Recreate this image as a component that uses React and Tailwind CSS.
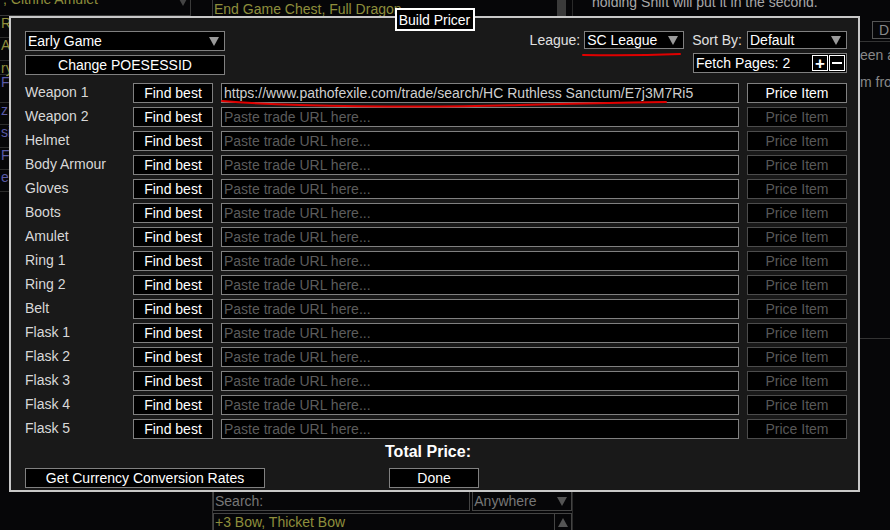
import React from "react";

const slots = [
  "Weapon 1",
  "Weapon 2",
  "Helmet",
  "Body Armour",
  "Gloves",
  "Boots",
  "Amulet",
  "Ring 1",
  "Ring 2",
  "Belt",
  "Flask 1",
  "Flask 2",
  "Flask 3",
  "Flask 4",
  "Flask 5",
];

// fragments of the item list peeking out from behind the dialog
const leftItems = [
  ["Ri", "h-[22px] text-[#8e8e3c]"],
  ["Am", "h-[23px] text-[#8e8e3c]"],
  ["ry", "h-[14px] text-[#8e8e3c]"],
  ["Fe", "h-[28px] text-[#5a5aa6]"],
  ["z F", "h-[22px] text-[#5a5aa6]"],
  ["sil", "h-[23px] text-[#5a5aa6]"],
  ["Fla", "h-[22px] text-[#5a5aa6]"],
  ["e", "h-[22px] text-[#5a5aa6]"],
];

function Arrow({ up, className = "" }) {
  return (
    <svg width="10" height="9" viewBox="0 0 10 9" className={className}>
      {up ? (
        <polygon points="0,9 10,9 5,0" fill="currentColor" />
      ) : (
        <polygon points="0,0 10,0 5,9" fill="currentColor" />
      )}
    </svg>
  );
}

function Dropdown({ value, className = "" }) {
  return (
    <div
      className={`flex items-center justify-between border border-[#808080] bg-black pl-[2px] pr-[5px] text-white ${className}`}
    >
      <span className="leading-none">{value}</span>
      <Arrow className="text-[#9a9a9a]" />
    </div>
  );
}

function Btn({ children, className = "", disabled }) {
  return (
    <div
      className={`flex items-center justify-center bg-black leading-none ${
        disabled
          ? "border border-[#4c4c4c] text-[#585858]"
          : "border border-[#808080] text-white"
      } ${className}`}
    >
      {children}
    </div>
  );
}

function Background() {
  return (
    <div className="flex h-full w-full">
      {/* item list on the left */}
      <div className="flex w-[191px] shrink-0 flex-col">
        <div className="flex h-[16px] items-start justify-between border-b border-r border-[#3a3a3a] pl-[3px] pr-[2px]">
          <span className="-mt-[8px] leading-none text-[#8e8e3c]">, Citrine Amulet</span>
          <Arrow className="-mt-[3px] text-[#444]" />
        </div>
        {leftItems.map(([t, c], i) => (
          <div key={i} className={`border-b border-[#2c2c2c] pl-[1px] leading-none ${c}`}>
            {t}
          </div>
        ))}
      </div>

      <div className="w-[21px] shrink-0" />

      {/* middle column */}
      <div className="flex w-[360px] shrink-0 flex-col border-l border-[#3a3a3a]">
        <div className="flex h-[16px] justify-between">
          <span className="pl-[1px] pt-[2px] leading-none text-[#8e8e3c]">End Game Chest, Full Dragon</span>
          <div className="mr-[6px] h-full w-[9px] bg-[#3a3a3a]" />
        </div>
        <div className="flex-1" />
        <div className="flex h-[20px] gap-[2px]">
          <div className="w-[258px] border border-[#444] pl-[1px] leading-[18px] text-[#777]">
            Search:
          </div>
          <div className="flex w-[100px] items-center justify-between border border-[#444] pl-[1px] pr-[4px] text-[#777]">
            <span className="leading-none">Anywhere</span>
            <Arrow className="text-[#555]" />
          </div>
        </div>
        <div className="mt-[2px] flex h-[17px] justify-between border border-b-0 border-[#444]">
          <span className="pl-[1px] pt-[1px] leading-none text-[#8e8e3c]">+3 Bow, Thicket Bow</span>
          <div className="flex w-[17px] items-center justify-center border-l border-[#444]">
            <Arrow up className="text-[#555]" />
          </div>
        </div>
      </div>

      {/* right column */}
      <div className="flex min-w-0 flex-1 flex-col overflow-hidden border-l border-[#2a2a2a]">
        <div className="-mt-[5px] h-[14px] whitespace-nowrap pl-[19px] leading-none text-[#a8a8a8]">
          holding Shift will put it in the second.
        </div>
        <div className="mt-[12px] flex h-[18px] pl-[299px]">
          <div className="w-[30px] shrink-0 border border-[#555] pl-[6px] leading-[16px] text-[#888]">D</div>
        </div>
        <div className="mt-[2px] border-b border-[#333]" />
        <div className="mt-[6px] whitespace-nowrap pl-[287px] leading-none text-[#888]">een all</div>
        <div className="mt-[13px] whitespace-nowrap pl-[287px] leading-none text-[#888]">m from</div>
        <div className="mt-[249px] border-b border-[#333]" />
      </div>
    </div>
  );
}

export default function App() {
  return (
    <div
      className="relative h-[530px] w-[890px] overflow-hidden bg-[#060608] text-[14px]"
      style={{ fontFamily: '"Liberation Sans", Arial, sans-serif' }}
    >
      <Background />

      {/* Build Pricer dialog */}
      <div className="absolute left-[9px] top-[16px] flex h-[476px] w-[851px] flex-col border-2 border-[#c8c8c8] bg-[#191919] pl-[14px] pr-[11px] pt-[13px]">
        <div className="absolute left-1/2 top-[-10px] flex h-[23px] w-[80px] -translate-x-1/2 items-center justify-center border-2 border-white bg-black leading-none text-white">
          Build Pricer
        </div>

        <div className="flex justify-between">
          <div className="flex w-[200px] flex-col gap-[4px]">
            <Dropdown value="Early Game" className="h-[20px]" />
            <Btn className="h-[20px]">Change POESESSID</Btn>
          </div>
          <div className="flex flex-col items-end gap-[4px]">
            <div className="flex items-center">
              <span className="mr-[4px] leading-none text-[#e0e0e0]">League:</span>
              <Dropdown value="SC League" className="h-[18px] w-[100px]" />
              <span className="ml-[8px] mr-[5px] leading-none text-[#e0e0e0]">Sort By:</span>
              <Dropdown value="Default" className="h-[18px] w-[100px]" />
            </div>
            <div className="flex h-[20px] w-[154px] items-center justify-between border border-[#808080] bg-black pl-[2px] pr-[1px]">
              <span className="leading-none text-white">Fetch Pages: 2</span>
              <div className="flex gap-[1px]">
                <div className="flex h-[16px] w-[16px] items-center justify-center border border-white bg-black text-[17px] font-bold leading-none text-white">
                  +
                </div>
                <div className="flex h-[16px] w-[16px] items-center justify-center border border-white bg-black">
                  <div className="h-[2px] w-[10px] bg-white" />
                </div>
              </div>
            </div>
          </div>
        </div>

        <div className="mt-[8px] flex flex-col gap-[4px]">
          {slots.map((s, i) => (
            <div key={s} className="flex h-[20px] items-center">
              <span className="w-[108px] pb-[3px] leading-none text-[#d8d8d8]">{s}</span>
              <Btn className="h-[20px] w-[80px]">Find best</Btn>
              <div
                className={`ml-[8px] flex h-[20px] w-[518px] items-center border border-[#808080] bg-black pl-[2px] leading-none ${
                  i === 0 ? "text-[#cfcfcf]" : "text-[#5c5c5c]"
                }`}
              >
                {i === 0
                  ? "https://www.pathofexile.com/trade/search/HC Ruthless Sanctum/E7j3M7Ri5"
                  : "Paste trade URL here..."}
              </div>
              <Btn className="ml-[8px] h-[20px] w-[100px]" disabled={i !== 0}>
                Price Item
              </Btn>
            </div>
          ))}
        </div>

        <div className="flex h-[21px] items-end justify-center pr-[16px]">
          <span className="text-[16px] font-bold leading-none text-white">Total Price:</span>
        </div>

        <div className="mt-[8px] flex gap-[124px]">
          <Btn className="h-[20px] w-[240px]">Get Currency Conversion Rates</Btn>
          <Btn className="h-[20px] w-[90px]">Done</Btn>
        </div>
      </div>

      {/* red annotations */}
      <svg
        className="pointer-events-none absolute left-0 top-0"
        width="890"
        height="530"
        viewBox="0 0 890 530"
      >
        <path d="M583 55 Q630 56 680 54" stroke="#e00000" strokeWidth="2" fill="none" strokeLinecap="round" />
        <path
          d="M222 101 Q260 104 300 105 Q420 108 520 105 Q600 103 666 102"
          stroke="#e00000"
          strokeWidth="2"
          fill="none"
          strokeLinecap="round"
        />
      </svg>
    </div>
  );
}
